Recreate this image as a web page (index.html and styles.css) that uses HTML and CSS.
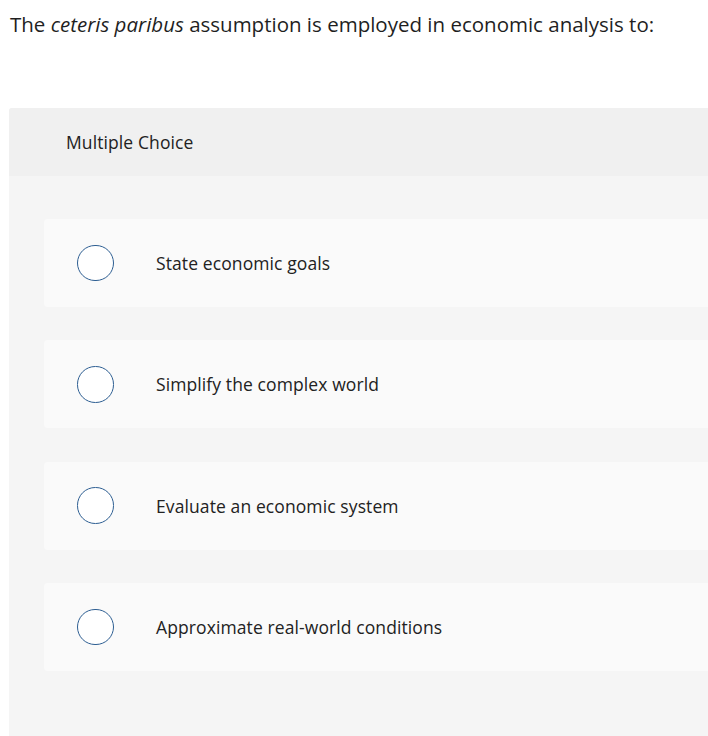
FILE: index.html
```html
<!DOCTYPE html>
<html>
<head>
<meta charset="utf-8">
<link rel="stylesheet" href="styles.css">
</head>
<body>
<p class="question">The <em>ceteris paribus</em> assumption is employed in economic analysis to:</p>
<section class="panel">
  <header class="panel-head">Multiple Choice</header>
  <div class="options">
    <label class="option"><span class="radio"></span><span class="text">State economic goals</span></label>
    <label class="option"><span class="radio"></span><span class="text">Simplify the complex world</span></label>
    <label class="option"><span class="radio"></span><span class="text">Evaluate an economic system</span></label>
    <label class="option"><span class="radio"></span><span class="text">Approximate real-world conditions</span></label>
  </div>
</section>
</body>
</html>
```
FILE: styles.css
```css
html, body {
  margin: 0;
  padding: 0;
  background: #ffffff;
  overflow: hidden;
}
body {
  font-family: "Open Sans", Lato, Arial, sans-serif;
  color: #1f1f1f;
  width: 708px;
  height: 736px;
}
.question {
  margin: 0;
  padding: 9px 0 0 10px;
  font-size: 20.5px;
  line-height: 30px;
  height: 98px;
  box-sizing: border-box;
}
.question em {
  font-style: italic;
}
.panel {
  margin-left: 9px;
  margin-top: 10px;
  width: 720px;
  height: 640px;
  background: #f5f5f5;
  border-top-left-radius: 3px;
}
.panel-head {
  height: 68px;
  background: #f0f0f0;
  border-top-left-radius: 3px;
  display: flex;
  align-items: center;
  padding-left: 57px;
  font-size: 17.5px;
  letter-spacing: 0.1px;
  color: #222;
}
.options {
  padding: 43px 0 0 35px;
  display: flex;
  flex-direction: column;
  gap: 33.3px;
}
.option {
  height: 88px;
  background: #fafafa;
  border-radius: 4px;
  display: flex;
  align-items: center;
  padding-left: 33px;
}
.radio {
  width: 34.5px;
  height: 34.5px;
  border: 1.75px solid #2d5e92;
  border-radius: 50%;
  background: #fff;
  flex: none;
}
.text {
  margin-left: 42.5px;
  font-size: 17.5px;
  letter-spacing: 0.1px;
  color: #222;
}
```
